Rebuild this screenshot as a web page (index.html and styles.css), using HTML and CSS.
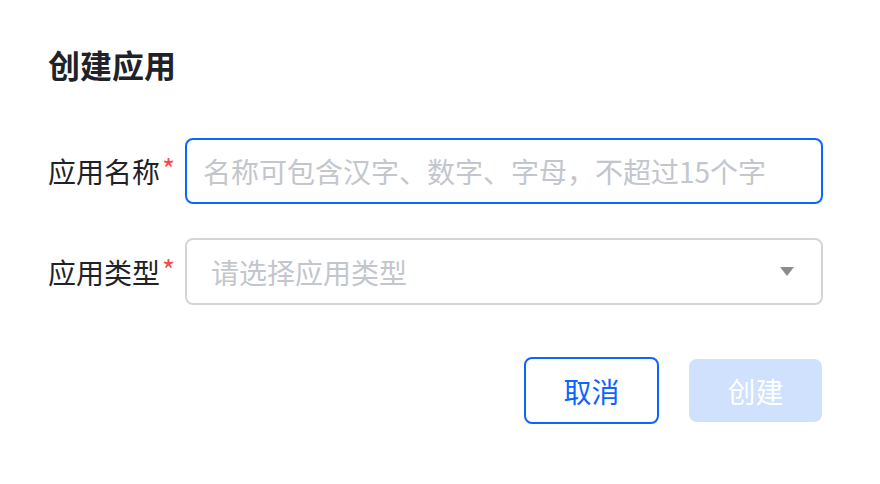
FILE: index.html
```html
<!DOCTYPE html>
<html>
<head>
  <meta charset="utf-8">
  <title>创建应用</title>
  <link rel="stylesheet" href="styles.css">
</head>
<body>
  <div class="dialog">
    <h1 class="title">创建应用</h1>
    <div class="form-row">
      <label class="label" for="app_name">应用名称<span class="required">*</span></label>
      <input type="text" id="app_name" class="text-input" placeholder="名称可包含汉字、数字、字母，不超过15个字">
    </div>
    <div class="form-row">
      <label class="label">应用类型<span class="required">*</span></label>
      <div class="select">
        <span class="select-placeholder">请选择应用类型</span>
        <svg class="caret" width="14" height="9" viewBox="0 0 14 9"><path d="M0 0 L14 0 L7 9 Z" fill="#8c8c8c"/></svg>
      </div>
    </div>
    <div class="actions">
      <button class="btn btn-cancel">取消</button>
      <button class="btn btn-create" disabled>创建</button>
    </div>
  </div>
</body>
</html>
```

FILE: styles.css
```css
body {
  margin: 0;
  background: #fff;
  font-family: "Noto Sans CJK SC", "Noto Sans", sans-serif;
  color: #1f2329;
}
.dialog {
  padding: 42px 57px 0 48px;
}
.title {
  margin: 0 0 52px;
  font-size: 32px;
  line-height: 44px;
  font-weight: 700;
}
.form-row {
  display: flex;
  align-items: center;
  margin-bottom: 34px;
}
.label {
  width: 137px;
  flex-shrink: 0;
  font-size: 28px;
  line-height: 40px;
  white-space: nowrap;
}
.required {
  color: #f54a45;
  font-size: 28px;
  line-height: 1;
  vertical-align: 3px;
  margin-left: 2px;
}
.text-input {
  box-sizing: border-box;
  width: 638px;
  height: 66px;
  padding: 0 16px;
  border: 2px solid #0a66ff;
  border-radius: 8px;
  outline: none;
  font-family: inherit;
  font-size: 28px;
  color: #1f2329;
}
.text-input::placeholder {
  color: #c3c6cc;
}
.select {
  box-sizing: border-box;
  width: 638px;
  height: 67px;
  padding: 0 27px 0 24px;
  border: 2px solid #d3d5d9;
  border-radius: 8px;
  display: flex;
  align-items: center;
  justify-content: space-between;
}
.select-placeholder {
  font-size: 28px;
  color: #c3c6cc;
}
.actions {
  display: flex;
  justify-content: flex-end;
  align-items: center;
  gap: 30px;
  padding-top: 18px;
  padding-right: 1px;
}
.btn {
  box-sizing: border-box;
  font-family: inherit;
  font-size: 28px;
  border-radius: 8px;
  cursor: pointer;
}
.btn-cancel {
  width: 135px;
  height: 67px;
  background: #fff;
  color: #0a66ff;
  border: 2px solid #0a66ff;
}
.btn-create {
  width: 133px;
  height: 63px;
  background: #cfe1fd;
  color: #fff;
  border: none;
  cursor: default;
}
```
